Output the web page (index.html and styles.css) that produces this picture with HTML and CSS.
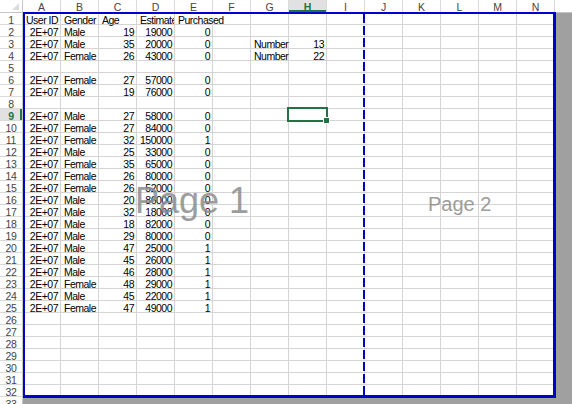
FILE: index.html
```html
<!DOCTYPE html>
<html>
<head>
<meta charset="utf-8">
<link rel="stylesheet" href="styles.css">
</head>
<body>
<div class="sheet">
  <div class="colheads">
    <div class="corner"><span class="tri"></span></div>
    <div class="ch">A</div><div class="ch">B</div><div class="ch">C</div><div class="ch">D</div><div class="ch">E</div><div class="ch">F</div><div class="ch">G</div><div class="ch sel">H</div><div class="ch">I</div><div class="ch">J</div><div class="ch">K</div><div class="ch">L</div><div class="ch">M</div><div class="ch">N</div><div class="ch"></div>
  </div>
  <div class="body">
    <div class="grid">
      <div class="row"><span class="rh">1</span><span>User ID</span><span>Gender</span><span>Age</span><span class="clip">EstimatedSalary</span><span class="spill">Purchased</span><span></span><span></span><span></span><span></span><span></span><span></span><span></span><span></span><span></span></div>
      <div class="row"><span class="rh">2</span><span class="n">2E+07</span><span>Male</span><span class="n">19</span><span class="n">19000</span><span class="n">0</span><span></span><span></span><span></span><span></span><span></span><span></span><span></span><span></span><span></span></div>
      <div class="row"><span class="rh">3</span><span class="n">2E+07</span><span>Male</span><span class="n">35</span><span class="n">20000</span><span class="n">0</span><span></span><span>Number</span><span class="n">13</span><span></span><span></span><span></span><span></span><span></span><span></span></div>
      <div class="row"><span class="rh">4</span><span class="n">2E+07</span><span>Female</span><span class="n">26</span><span class="n">43000</span><span class="n">0</span><span></span><span>Number</span><span class="n">22</span><span></span><span></span><span></span><span></span><span></span><span></span></div>
      <div class="row"><span class="rh">5</span><span></span><span></span><span></span><span></span><span></span><span></span><span></span><span></span><span></span><span></span><span></span><span></span><span></span><span></span></div>
      <div class="row"><span class="rh">6</span><span class="n">2E+07</span><span>Female</span><span class="n">27</span><span class="n">57000</span><span class="n">0</span><span></span><span></span><span></span><span></span><span></span><span></span><span></span><span></span><span></span></div>
      <div class="row"><span class="rh">7</span><span class="n">2E+07</span><span>Male</span><span class="n">19</span><span class="n">76000</span><span class="n">0</span><span></span><span></span><span></span><span></span><span></span><span></span><span></span><span></span><span></span></div>
      <div class="row"><span class="rh">8</span><span></span><span></span><span></span><span></span><span></span><span></span><span></span><span></span><span></span><span></span><span></span><span></span><span></span><span></span></div>
      <div class="row"><span class="rh sel">9</span><span class="n">2E+07</span><span>Male</span><span class="n">27</span><span class="n">58000</span><span class="n">0</span><span></span><span></span><span></span><span></span><span></span><span></span><span></span><span></span><span></span></div>
      <div class="row"><span class="rh">10</span><span class="n">2E+07</span><span>Female</span><span class="n">27</span><span class="n">84000</span><span class="n">0</span><span></span><span></span><span></span><span></span><span></span><span></span><span></span><span></span><span></span></div>
      <div class="row"><span class="rh">11</span><span class="n">2E+07</span><span>Female</span><span class="n">32</span><span class="n">150000</span><span class="n">1</span><span></span><span></span><span></span><span></span><span></span><span></span><span></span><span></span><span></span></div>
      <div class="row"><span class="rh">12</span><span class="n">2E+07</span><span>Male</span><span class="n">25</span><span class="n">33000</span><span class="n">0</span><span></span><span></span><span></span><span></span><span></span><span></span><span></span><span></span><span></span></div>
      <div class="row"><span class="rh">13</span><span class="n">2E+07</span><span>Female</span><span class="n">35</span><span class="n">65000</span><span class="n">0</span><span></span><span></span><span></span><span></span><span></span><span></span><span></span><span></span><span></span></div>
      <div class="row"><span class="rh">14</span><span class="n">2E+07</span><span>Female</span><span class="n">26</span><span class="n">80000</span><span class="n">0</span><span></span><span></span><span></span><span></span><span></span><span></span><span></span><span></span><span></span></div>
      <div class="row"><span class="rh">15</span><span class="n">2E+07</span><span>Female</span><span class="n">26</span><span class="n">52000</span><span class="n">0</span><span></span><span></span><span></span><span></span><span></span><span></span><span></span><span></span><span></span></div>
      <div class="row"><span class="rh">16</span><span class="n">2E+07</span><span>Male</span><span class="n">20</span><span class="n">86000</span><span class="n">0</span><span></span><span></span><span></span><span></span><span></span><span></span><span></span><span></span><span></span></div>
      <div class="row"><span class="rh">17</span><span class="n">2E+07</span><span>Male</span><span class="n">32</span><span class="n">18000</span><span class="n">0</span><span></span><span></span><span></span><span></span><span></span><span></span><span></span><span></span><span></span></div>
      <div class="row"><span class="rh">18</span><span class="n">2E+07</span><span>Male</span><span class="n">18</span><span class="n">82000</span><span class="n">0</span><span></span><span></span><span></span><span></span><span></span><span></span><span></span><span></span><span></span></div>
      <div class="row"><span class="rh">19</span><span class="n">2E+07</span><span>Male</span><span class="n">29</span><span class="n">80000</span><span class="n">0</span><span></span><span></span><span></span><span></span><span></span><span></span><span></span><span></span><span></span></div>
      <div class="row"><span class="rh">20</span><span class="n">2E+07</span><span>Male</span><span class="n">47</span><span class="n">25000</span><span class="n">1</span><span></span><span></span><span></span><span></span><span></span><span></span><span></span><span></span><span></span></div>
      <div class="row"><span class="rh">21</span><span class="n">2E+07</span><span>Male</span><span class="n">45</span><span class="n">26000</span><span class="n">1</span><span></span><span></span><span></span><span></span><span></span><span></span><span></span><span></span><span></span></div>
      <div class="row"><span class="rh">22</span><span class="n">2E+07</span><span>Male</span><span class="n">46</span><span class="n">28000</span><span class="n">1</span><span></span><span></span><span></span><span></span><span></span><span></span><span></span><span></span><span></span></div>
      <div class="row"><span class="rh">23</span><span class="n">2E+07</span><span>Female</span><span class="n">48</span><span class="n">29000</span><span class="n">1</span><span></span><span></span><span></span><span></span><span></span><span></span><span></span><span></span><span></span></div>
      <div class="row"><span class="rh">24</span><span class="n">2E+07</span><span>Male</span><span class="n">45</span><span class="n">22000</span><span class="n">1</span><span></span><span></span><span></span><span></span><span></span><span></span><span></span><span></span><span></span></div>
      <div class="row"><span class="rh">25</span><span class="n">2E+07</span><span>Female</span><span class="n">47</span><span class="n">49000</span><span class="n">1</span><span></span><span></span><span></span><span></span><span></span><span></span><span></span><span></span><span></span></div>
      <div class="row"><span class="rh">26</span><span></span><span></span><span></span><span></span><span></span><span></span><span></span><span></span><span></span><span></span><span></span><span></span><span></span><span></span></div>
      <div class="row"><span class="rh">27</span><span></span><span></span><span></span><span></span><span></span><span></span><span></span><span></span><span></span><span></span><span></span><span></span><span></span><span></span></div>
      <div class="row"><span class="rh">28</span><span></span><span></span><span></span><span></span><span></span><span></span><span></span><span></span><span></span><span></span><span></span><span></span><span></span><span></span></div>
      <div class="row"><span class="rh">29</span><span></span><span></span><span></span><span></span><span></span><span></span><span></span><span></span><span></span><span></span><span></span><span></span><span></span><span></span></div>
      <div class="row"><span class="rh">30</span><span></span><span></span><span></span><span></span><span></span><span></span><span></span><span></span><span></span><span></span><span></span><span></span><span></span><span></span></div>
      <div class="row"><span class="rh">31</span><span></span><span></span><span></span><span></span><span></span><span></span><span></span><span></span><span></span><span></span><span></span><span></span><span></span><span></span></div>
      <div class="row"><span class="rh">32</span><span></span><span></span><span></span><span></span><span></span><span></span><span></span><span></span><span></span><span></span><span></span><span></span><span></span><span></span></div>
      <div class="row"><span class="rh">33</span><span class="out"></span></div>
    </div>
    <div class="outside"></div>
  </div>

  <div class="page"></div>
  <div class="break"></div>
  <div class="wm wm1">Page 1</div>
  <div class="wm wm2">Page 2</div>
  <div class="selbox"></div>
  <div class="handle"></div>
</div>
</body>
</html>
```

FILE: styles.css
```css
* {
  box-sizing: border-box;
  margin: 0;
  padding: 0;
}

body {
  margin: 0;
  background: #ffffff;
  font-family: "Liberation Sans", Arial, sans-serif;
  font-size: 10.5px;
  letter-spacing: -0.5px;
  color: #000000;
}

.sheet {
  position: relative;
  width: 572px;
  height: 404px;
  overflow: hidden;
}

.colheads {
  display: flex;
  height: 13px;
  border-bottom: 1px solid #c6c6c6;
}

.corner {
  position: relative;
  width: 23px;
  flex: none;
  border-right: 1px solid #c6c6c6;
}

.tri {
  position: absolute;
  right: 3px;
  bottom: 2px;
  width: 0;
  height: 0;
  border-left: 7px solid transparent;
  border-bottom: 7px solid #dcdcdc;
}

.ch {
  width: 38px;
  flex: none;
  text-align: center;
  color: #444444;
  line-height: 12px;
  padding-top: 1px;
  border-right: 1px solid #dadada;
  letter-spacing: 0;
}

.ch.sel {
  background: #e1e1e1;
  color: #217346;
  font-weight: bold;
  box-shadow: inset 0 -2px 0 #217346;
}

.body {
  display: flex;
  height: 391px;
}

.grid {
  width: 555px;
  flex: none;
}

.outside {
  flex: 1;
  background: #a0a0a0;
}

.row {
  display: flex;
  height: 12px;
}

.row > span {
  width: 38px;
  height: 12px;
  flex: none;
  border-right: 1px solid #d4d4d4;
  border-bottom: 1px solid #d4d4d4;
  line-height: 12px;
  padding: 1px 2px 0 3px;
  white-space: nowrap;
}

.row > span.rh {
  width: 23px;
  text-align: center;
  color: #444444;
  padding: 1px 0 0 0;
  border-right: 1px solid #c6c6c6;
  border-bottom: 1px solid #dadada;
  letter-spacing: -0.3px;
}

.row > span.rh.sel {
  background: #e1e1e1;
  color: #217346;
  font-weight: bold;
  box-shadow: inset -2px 0 0 #217346;
}

.row > span.n {
  text-align: right;
}

.row > span.clip {
  overflow: hidden;
}

.row > span.spill {
  border-right-color: transparent;
}

.row > span.out {
  flex: 1;
  width: auto;
  background: #a0a0a0;
  border: 0;
}

.page {
  position: absolute;
  left: 23px;
  top: 12px;
  width: 533px;
  height: 386px;
  border-style: solid;
  border-color: #0000cc;
  border-width: 2px 3px 3px 2px;
}

.break {
  position: absolute;
  left: 363px;
  top: 14px;
  width: 2px;
  height: 381px;
  background: repeating-linear-gradient(to bottom, #0000cc 0, #0000cc 9px, transparent 9px, transparent 12px);
}

.wm {
  position: absolute;
  font-family: "Liberation Sans", Arial, sans-serif;
  letter-spacing: 0;
  color: #8c8c8c;
  opacity: 0.85;
  white-space: nowrap;
}

.wm1 {
  left: 135px;
  top: 183px;
  font-size: 36px;
  line-height: 36px;
}

.wm2 {
  left: 428px;
  top: 194px;
  font-size: 20px;
  line-height: 20px;
}

.selbox {
  position: absolute;
  left: 287px;
  top: 107px;
  width: 41px;
  height: 15px;
  border: 2px solid #217346;
}

.handle {
  position: absolute;
  left: 323px;
  top: 117px;
  width: 7px;
  height: 7px;
  background: #217346;
  border: 1px solid #ffffff;
}
```
